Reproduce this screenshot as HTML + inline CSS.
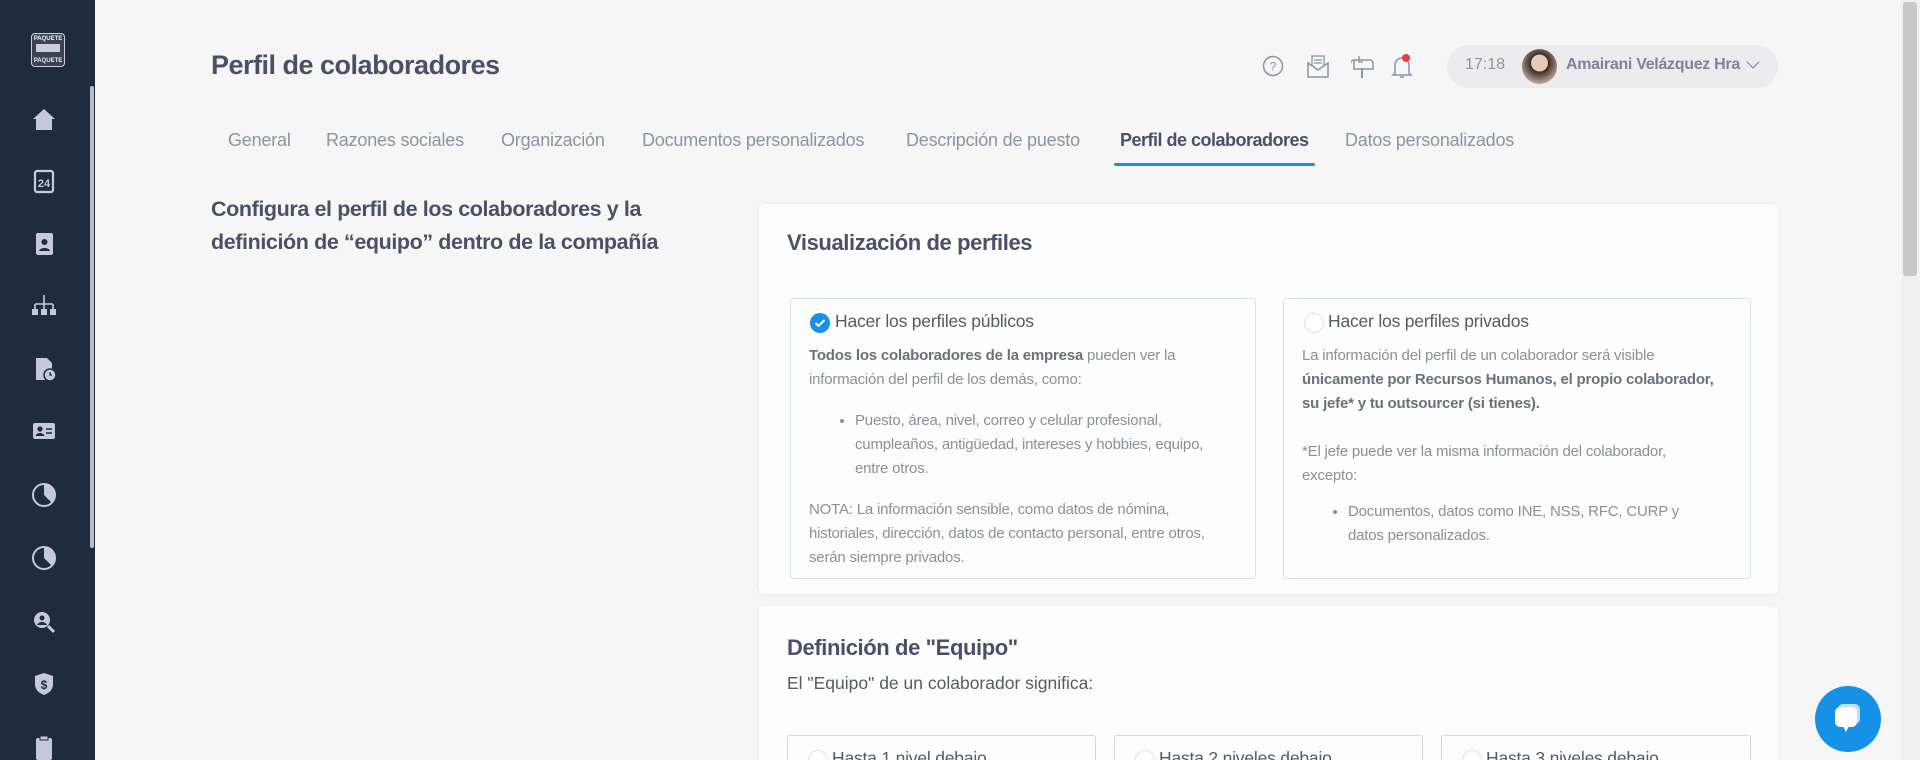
<!DOCTYPE html>
<html><head><meta charset="utf-8"><style>
*{box-sizing:border-box;margin:0;padding:0}
html,body{width:1920px;height:760px;overflow:hidden}
body{background:#f6f6f7;font-family:"Liberation Sans",sans-serif;color:#8a8f9c}
#w{position:relative;width:1920px;height:760px;overflow:hidden}
.sb{position:absolute;left:0;top:0;width:95px;height:760px;background:#212b40}
.sbar{position:absolute;left:90px;top:86px;width:4px;height:462px;background:#b8bccb;border-radius:2px}
.ic{position:absolute;left:30px;width:28px;height:28px}
.ab{position:absolute;white-space:nowrap}
h1{position:absolute;left:211px;top:50px;font-size:27px;color:#4a5068;font-weight:bold;letter-spacing:-0.5px}
.tab{position:absolute;top:130px;font-size:18px;color:#8c92a8;letter-spacing:-0.2px}
.card{position:absolute;left:759px;width:1019px;background:#fdfdfd;border-radius:6px;box-shadow:0 1px 4px rgba(0,0,0,.06)}
.opt{position:absolute;border:1px solid #d5e2f2;border-radius:3px;background:#fdfdfd}
.t{font-size:15px;line-height:24px;color:#8a8f9c;letter-spacing:-0.2px}
.t b{color:#6b7080}
.ot{position:absolute;top:12px;left:44px;font-size:17.5px;color:#555a68;letter-spacing:-0.2px}
.rad{position:absolute;left:20px;top:14px;width:20px;height:20px;border-radius:50%;border:1px solid #dde1e8;background:#fff}
ul{padding-left:46px}
</style></head><body><div id="w">
<div class="sb">
 <div class="sbar"></div>
 <div style="position:absolute;left:31px;top:33px;width:34px;height:34px;border:1.5px solid #ccd;border-radius:4px;background:#3a4256;font-size:6px;color:#eee;text-align:center;line-height:10px;font-weight:bold">PAQUETE<br><span style="display:inline-block;width:24px;height:8px;background:#ccd"></span><br>PAQUETE</div>
 <svg class="ic" style="top:105px" viewBox="0 0 28 28"><path d="M14 4 L25 14 H22 V25 H6 V14 H3Z" fill="#c5c9dd"/></svg>
 <svg class="ic" style="top:167px" viewBox="0 0 28 28"><rect x="5" y="4" width="18" height="21" rx="2" fill="none" stroke="#c5c9dd" stroke-width="2.2"/><text x="14" y="20" font-size="11" font-weight="bold" fill="#c5c9dd" text-anchor="middle" font-family="Liberation Sans">24</text></svg>
 <svg class="ic" style="top:230px" viewBox="0 0 28 28"><rect x="6" y="3" width="17" height="22" rx="2" fill="#c5c9dd"/><circle cx="14.5" cy="12" r="3" fill="#212b40"/><path d="M9 21c1-4 10-4 11 0z" fill="#212b40"/></svg>
 <svg class="ic" style="top:292px" viewBox="0 0 28 28"><path d="M14 3v9M5 12h18M5 12v5M14 12v5M23 12v5" stroke="#c5c9dd" stroke-width="1.6" fill="none"/><rect x="2" y="17" width="6" height="6" fill="#c5c9dd"/><rect x="11" y="17" width="6" height="6" fill="#c5c9dd"/><rect x="20" y="17" width="6" height="6" fill="#c5c9dd"/></svg>
 <svg class="ic" style="top:355px" viewBox="0 0 28 28"><path d="M6 3h11l5 5v17H6z" fill="#c5c9dd"/><circle cx="20" cy="20" r="6" fill="#c5c9dd" stroke="#212b40" stroke-width="1.5"/><path d="M20 17v3h2" stroke="#212b40" stroke-width="1.3" fill="none"/></svg>
 <svg class="ic" style="top:417px" viewBox="0 0 28 28"><rect x="3" y="6" width="22" height="16" rx="2" fill="#c5c9dd"/><circle cx="10" cy="12" r="2.6" fill="#212b40"/><path d="M5.5 19c1-4 8-4 9 0z" fill="#212b40"/><path d="M16 12h6M16 16h6" stroke="#212b40" stroke-width="1.5"/></svg>
 <svg class="ic" style="top:481px" viewBox="0 0 28 28"><circle cx="14" cy="14" r="11" fill="none" stroke="#c5c9dd" stroke-width="2"/><path d="M14 14V3a11 11 0 0 1 8 19z" fill="#c5c9dd"/></svg>
 <svg class="ic" style="top:544px" viewBox="0 0 28 28"><circle cx="14" cy="14" r="11" fill="none" stroke="#c5c9dd" stroke-width="2"/><path d="M14 14V3a11 11 0 0 1 8 19z" fill="#c5c9dd"/></svg>
 <svg class="ic" style="top:608px" viewBox="0 0 28 28"><circle cx="12" cy="12" r="8" fill="#c5c9dd"/><circle cx="12" cy="10" r="2.5" fill="#212b40"/><path d="M7 17c2-4 8-4 10 0" fill="#212b40"/><path d="M18 18l6 6" stroke="#c5c9dd" stroke-width="3"/></svg>
 <svg class="ic" style="top:670px" viewBox="0 0 28 28"><path d="M14 3l9 3v8c0 6-4 9-9 11-5-2-9-5-9-11V6z" fill="#c5c9dd"/><text x="14" y="19" font-size="12" font-weight="bold" fill="#212b40" text-anchor="middle" font-family="Liberation Sans">$</text></svg>
 <svg class="ic" style="top:733px" viewBox="0 0 28 28"><rect x="6" y="5" width="16" height="22" rx="2" fill="#c5c9dd"/><rect x="10" y="3" width="8" height="4" fill="#c5c9dd" stroke="#212b40"/></svg>
</div>

<h1>Perfil de colaboradores</h1>
<svg class="ab" style="left:1262px;top:55px" width="22" height="22" viewBox="0 0 22 22"><circle cx="11" cy="11" r="9.5" fill="none" stroke="#8c92a8" stroke-width="1.5"/><text x="11" y="15.5" font-size="12" text-anchor="middle" fill="#8c92a8" font-family="Liberation Sans">?</text></svg>
<svg class="ab" style="left:1306px;top:53px" width="24" height="26" viewBox="0 0 24 26"><path d="M2 10v14h20V10L12 17z" fill="none" stroke="#8c92a8" stroke-width="1.5"/><path d="M6 12V3h12v9M8 7h8M8 10h8" fill="none" stroke="#8c92a8" stroke-width="1.3"/></svg>
<svg class="ab" style="left:1351px;top:54px" width="24" height="26" viewBox="0 0 24 26"><path d="M3 6h16a3 3 0 0 1 3 3v6H3z M3 6a3 3 0 0 0-3 3" fill="none" stroke="#8c92a8" stroke-width="1.5"/><path d="M11 15v9" stroke="#8c92a8" stroke-width="2"/><path d="M8 2v6h4" fill="none" stroke="#8c92a8" stroke-width="1.3"/></svg>
<svg class="ab" style="left:1390px;top:52px" width="24" height="28" viewBox="0 0 24 28"><path d="M5 21V13a7 7 0 0 1 14 0v8l2 2H3z M10 25h4" fill="none" stroke="#8c92a8" stroke-width="1.5"/><circle cx="16" cy="6" r="4" fill="#ef3b3b"/></svg>
<div class="ab" style="left:1447px;top:45px;width:331px;height:43px;border-radius:22px;background:#ececee"></div>
<div class="ab" style="left:1465px;top:56px;font-size:16px;color:#8c92a8">17:18</div>
<div class="ab" style="left:1522px;top:49px;width:35px;height:35px;border-radius:50%;background:radial-gradient(circle at 50% 40%,#e8c9b5 0 30%,#3a2a24 32%,#cdb5a8 80%)"></div>
<div class="ab" style="left:1566px;top:56px;font-size:16px;color:#7d8398;font-weight:bold;letter-spacing:-0.3px">Amairani Velázquez Hra</div>
<svg class="ab" style="left:1746px;top:60px" width="14" height="10" viewBox="0 0 14 10"><path d="M1 2l6 6 6-6" fill="none" stroke="#8c92a8" stroke-width="1.3"/></svg>

<div class="tab" style="left:228px">General</div>
<div class="tab" style="left:326px">Razones sociales</div>
<div class="tab" style="left:501px">Organización</div>
<div class="tab" style="left:642px">Documentos personalizados</div>
<div class="tab" style="left:906px">Descripción de puesto</div>
<div class="tab" style="left:1120px;color:#4a5068;font-weight:bold;letter-spacing:-0.5px">Perfil de colaboradores</div>
<div class="tab" style="left:1345px">Datos personalizados</div>
<div class="ab" style="left:1114px;top:163px;width:201px;height:3px;background:#1592e6;border-radius:2px"></div>

<div class="ab" style="left:211px;top:193px;font-size:21.5px;line-height:33px;color:#4a5068;font-weight:bold;letter-spacing:-0.4px">Configura el perfil de los colaboradores y la<br>definición de “equipo” dentro de la compañía</div>

<div class="card" style="top:204px;height:390px">
 <div class="ab" style="left:28px;top:26px;font-size:22px;color:#4a5068;font-weight:bold;letter-spacing:-0.4px">Visualización de perfiles</div>
 <div class="opt" style="left:31px;top:94px;width:466px;height:281px">
  <svg class="ab" style="left:19px;top:14px" width="20" height="20" viewBox="0 0 20 20"><circle cx="10" cy="10" r="10" fill="#1592e6"/><path d="M5.5 10l3 3 6-6" fill="none" stroke="#fff" stroke-width="2"/></svg>
  <div class="ot">Hacer los perfiles públicos</div>
  <div class="ab t" style="left:18px;top:45px;white-space:normal;width:420px"><b>Todos los colaboradores de la empresa</b> pueden ver la información del perfil de los demás, como:
   <ul style="margin-top:17px"><li>Puesto, área, nivel, correo y celular profesional, cumpleaños, antigüedad, intereses y hobbies, equipo, entre otros.</li></ul>
   <div style="margin-top:17px">NOTA: La información sensible, como datos de nómina, historiales, dirección, datos de contacto personal, entre otros, serán siempre privados.</div></div>
 </div>
 <div class="opt" style="left:524px;top:94px;width:468px;height:281px">
  <div class="rad"></div>
  <div class="ot">Hacer los perfiles privados</div>
  <div class="ab t" style="left:18px;top:45px;white-space:normal;width:412px">La información del perfil de un colaborador será visible <b>únicamente por Recursos Humanos, el propio colaborador, su jefe* y tu outsourcer (si tienes).</b>
   <div style="margin-top:24px">*El jefe puede ver la misma información del colaborador, excepto:</div>
   <ul style="margin-top:12px"><li>Documentos, datos como INE, NSS, RFC, CURP y datos personalizados.</li></ul></div>
 </div>
</div>

<div class="card" style="top:606px;height:170px">
 <div class="ab" style="left:28px;top:29px;font-size:22px;color:#4a5068;font-weight:bold;letter-spacing:-0.4px">Definición de "Equipo"</div>
 <div class="ab" style="left:28px;top:67px;font-size:17.5px;color:#555a68">El "Equipo" de un colaborador significa:</div>
 <div class="opt" style="left:28px;top:129px;width:309px;height:60px;border-color:#d3d6e0"><div class="rad"></div><div class="ot">Hasta 1 nivel debajo</div></div>
 <div class="opt" style="left:355px;top:129px;width:309px;height:60px;border-color:#d3d6e0"><div class="rad"></div><div class="ot">Hasta 2 niveles debajo</div></div>
 <div class="opt" style="left:682px;top:129px;width:310px;height:60px;border-color:#d3d6e0"><div class="rad"></div><div class="ot">Hasta 3 niveles debajo</div></div>
</div>

<div class="ab" style="left:1901px;top:0;width:19px;height:760px;background:#f0f0f0"></div>
<div class="ab" style="left:1903px;top:2px;width:14px;height:274px;background:#c8c8c8;border-radius:3px"></div>

<div class="ab" style="left:1815px;top:686px;width:66px;height:66px;border-radius:50%;background:#1592e6"></div>
<svg class="ab" style="left:1832px;top:702px" width="32" height="34" viewBox="0 0 32 34"><rect x="6" y="2" width="22" height="20" rx="5" fill="#bfe0fa"/><rect x="3" y="5" width="22" height="20" rx="5" fill="#fff"/><path d="M11 24l3 6 3-6z" fill="#fff"/></svg>
</div></body></html>
